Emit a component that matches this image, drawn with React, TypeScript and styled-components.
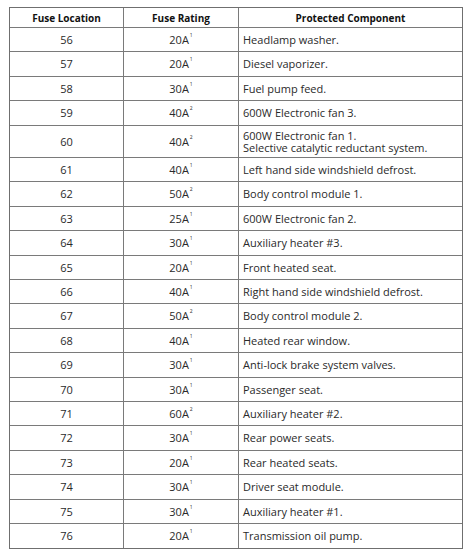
import React from "react";
import styled, { createGlobalStyle } from "styled-components";

const Global = createGlobalStyle`
  html, body { margin: 0; padding: 0; background: #ffffff; }
  body { font-family: "Open Sans", "Liberation Sans", sans-serif; }
`;

const Page = styled.div`
  padding: 7px 0 0 9px;
`;

const Table = styled.div`
  width: 454px;
  display: grid;
  grid-template-columns: 114px 115px 1fr;
  border: 1px solid #6f6f6f;
  box-sizing: border-box;
`;

const Cell = styled.div<{ $head?: boolean; $align?: "left" | "center"; $h: number; $last?: boolean; $lastRow?: boolean }>`
  height: ${(p) => p.$h}px;
  box-sizing: border-box;
  display: flex;
  flex-direction: column;
  justify-content: center;
  align-items: ${(p) => (p.$align === "left" ? "flex-start" : "center")};
  padding: ${(p) => (p.$align === "left" ? "0 4px" : "0")};
  border-right: ${(p) => (p.$last ? "none" : "1px solid #7a7a7a")};
  border-bottom: ${(p) => (p.$lastRow ? "none" : "1px solid #7a7a7a")};
  font-size: ${(p) => (p.$head ? "10px" : "11px")};
  font-weight: ${(p) => (p.$head ? 700 : 400)};
  color: ${(p) => (p.$head ? "#111" : "#2a2a2a")};
  line-height: 12px;
  white-space: nowrap;
`;

const Sup = styled.sup`
  font-size: 5px;
  vertical-align: top;
  position: relative;
  top: -1px;
  margin-left: 1px;
  line-height: 1;
`;

type Row = { loc: string; amp: string; note: string; comp: string[] };

const rows: Row[] = [
  { loc: "56", amp: "20A", note: "1", comp: ["Headlamp washer."] },
  { loc: "57", amp: "20A", note: "1", comp: ["Diesel vaporizer."] },
  { loc: "58", amp: "30A", note: "1", comp: ["Fuel pump feed."] },
  { loc: "59", amp: "40A", note: "2", comp: ["600W Electronic fan 3."] },
  { loc: "60", amp: "40A", note: "2", comp: ["600W Electronic fan 1.", "Selective catalytic reductant system."] },
  { loc: "61", amp: "40A", note: "1", comp: ["Left hand side windshield defrost."] },
  { loc: "62", amp: "50A", note: "2", comp: ["Body control module 1."] },
  { loc: "63", amp: "25A", note: "1", comp: ["600W Electronic fan 2."] },
  { loc: "64", amp: "30A", note: "1", comp: ["Auxiliary heater #3."] },
  { loc: "65", amp: "20A", note: "1", comp: ["Front heated seat."] },
  { loc: "66", amp: "40A", note: "1", comp: ["Right hand side windshield defrost."] },
  { loc: "67", amp: "50A", note: "2", comp: ["Body control module 2."] },
  { loc: "68", amp: "40A", note: "1", comp: ["Heated rear window."] },
  { loc: "69", amp: "30A", note: "1", comp: ["Anti-lock brake system valves."] },
  { loc: "70", amp: "30A", note: "1", comp: ["Passenger seat."] },
  { loc: "71", amp: "60A", note: "2", comp: ["Auxiliary heater #2."] },
  { loc: "72", amp: "30A", note: "1", comp: ["Rear power seats."] },
  { loc: "73", amp: "20A", note: "1", comp: ["Rear heated seats."] },
  { loc: "74", amp: "30A", note: "1", comp: ["Driver seat module."] },
  { loc: "75", amp: "30A", note: "1", comp: ["Auxiliary heater #1."] },
  { loc: "76", amp: "20A", note: "1", comp: ["Transmission oil pump."] },
];

const Line = styled.span`
  display: block;
`;

export default function App() {
  // cumulative row heights to spread 24.4px rows across whole pixels
  let acc = 20;
  const heights = rows.map((r, i) => {
    const target = 20 + (i + 1) * 24.4 + (i >= 4 ? 8 : 0);
    const h = Math.round(target) - Math.round(acc);
    acc = target;
    return h;
  });
  return (
    <>
      <Global />
      <Page>
        <Table>
          <Cell $head $h={20}>Fuse Location</Cell>
          <Cell $head $h={20}>Fuse Rating</Cell>
          <Cell $head $h={20} $last>Protected Component</Cell>
          {rows.map((r, i) => {
            const last = i === rows.length - 1;
            return (
              <React.Fragment key={r.loc}>
                <Cell $h={heights[i]} $lastRow={last}>{r.loc}</Cell>
                <Cell $h={heights[i]} $lastRow={last}>
                  <span>
                    {r.amp}
                    <Sup>{r.note}</Sup>
                  </span>
                </Cell>
                <Cell $h={heights[i]} $align="left" $last $lastRow={last}>
                  {r.comp.map((c) => (
                    <Line key={c}>{c}</Line>
                  ))}
                </Cell>
              </React.Fragment>
            );
          })}
        </Table>
      </Page>
    </>
  );
}
